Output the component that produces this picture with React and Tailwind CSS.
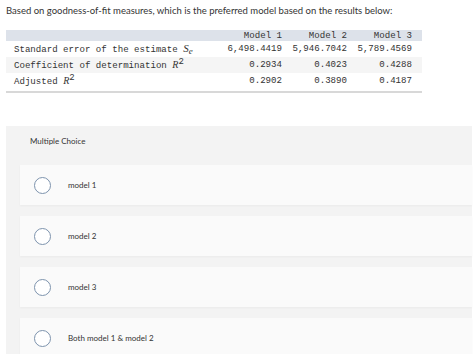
import React from "react";

const rows = [
  { label: "se", values: ["6,498.4419", "5,946.7042", "5,789.4569"], bg: "bg-white", h: "h-[15px]" },
  { label: "r2", values: ["0.2934", "0.4023", "0.4288"], bg: "bg-[#f5f5f5]", h: "h-[16px]" },
  { label: "adj", values: ["0.2902", "0.3890", "0.4187"], bg: "bg-white", h: "h-[19px] align-top pt-[1px]" },
];

const choices = ["model 1", "model 2", "model 3", "Both model 1 & model 2"];

function R2() {
  return (
    <>
      <span className="font-['Liberation_Serif',serif] italic text-[10px]">R</span>
      <span className="relative top-[-4px] text-[9px] leading-none">2</span>
    </>
  );
}

function Label({ kind }) {
  // math symbols in serif italic, like the source renders them
  if (kind === "se") {
    return (
      <span>
        Standard error of the estimate{" "}
        <span className="font-['Liberation_Serif',serif] italic text-[11px]">S</span>
        <span className="relative top-[2px] font-['Liberation_Serif',serif] italic text-[9px] leading-none">e</span>
      </span>
    );
  }
  if (kind === "r2") {
    return (
      <span>
        Coefficient of determination <R2 />
      </span>
    );
  }
  return (
    <span>
      Adjusted <R2 />
    </span>
  );
}

export default function App() {
  return (
    <div className="w-[474px] h-[354px] overflow-hidden bg-white text-[#333] font-['Lato',sans-serif]">
      <p className="pl-[6px] pt-[5px] text-[9.5px] leading-[12px]">
        Based on goodness-of-fit measures, which is the preferred model based on the results below:
      </p>

      <table className="ml-[6px] mt-[13px] w-[416px] border-collapse font-['Liberation_Mono',monospace] text-[9.1px] text-[#333]">
        <thead>
          <tr className="bg-[#dde2ea] h-[11px]">
            <th className="p-0"></th>
            {["Model 1", "Model 2", "Model 3"].map((m) => (
              <th key={m} className="w-[65px] p-0 pr-[10px] text-right font-normal leading-[11px]">
                {m}
              </th>
            ))}
          </tr>
        </thead>
        <tbody className="border-b-2 border-[#d8d8d8]">
          {rows.map((r) => (
            <tr key={r.label} className={r.bg}>
              <td className={`pl-[8px] p-0 leading-[14px] whitespace-nowrap ${r.h}`}>
                <Label kind={r.label} />
              </td>
              {r.values.map((v, i) => (
                <td key={i} className={`p-0 pr-[10px] text-right leading-[14px] whitespace-nowrap ${r.h}`}>
                  {v}
                </td>
              ))}
            </tr>
          ))}
        </tbody>
      </table>

      <div className="ml-[6px] mt-[33px] w-[466px] h-[300px] bg-[#f3f3f3]">
        <div className="h-[39px] pl-[24px] flex items-center pb-[10px] text-[8px]">
          Multiple Choice
        </div>
        <div className="ml-[14px] flex flex-col gap-[11px]">
          {choices.map((c) => (
            <div
              key={c}
              className="h-[40px] bg-[#fafafa] shadow-[0_1px_2px_rgba(0,0,0,0.04)] flex items-center pl-[14px]"
            >
              <span className="w-[17px] h-[17px] rounded-full border border-[#7d93ad] bg-white shrink-0"></span>
              <span className="ml-[17px] text-[8px]">{c}</span>
            </div>
          ))}
        </div>
      </div>
    </div>
  );
}
